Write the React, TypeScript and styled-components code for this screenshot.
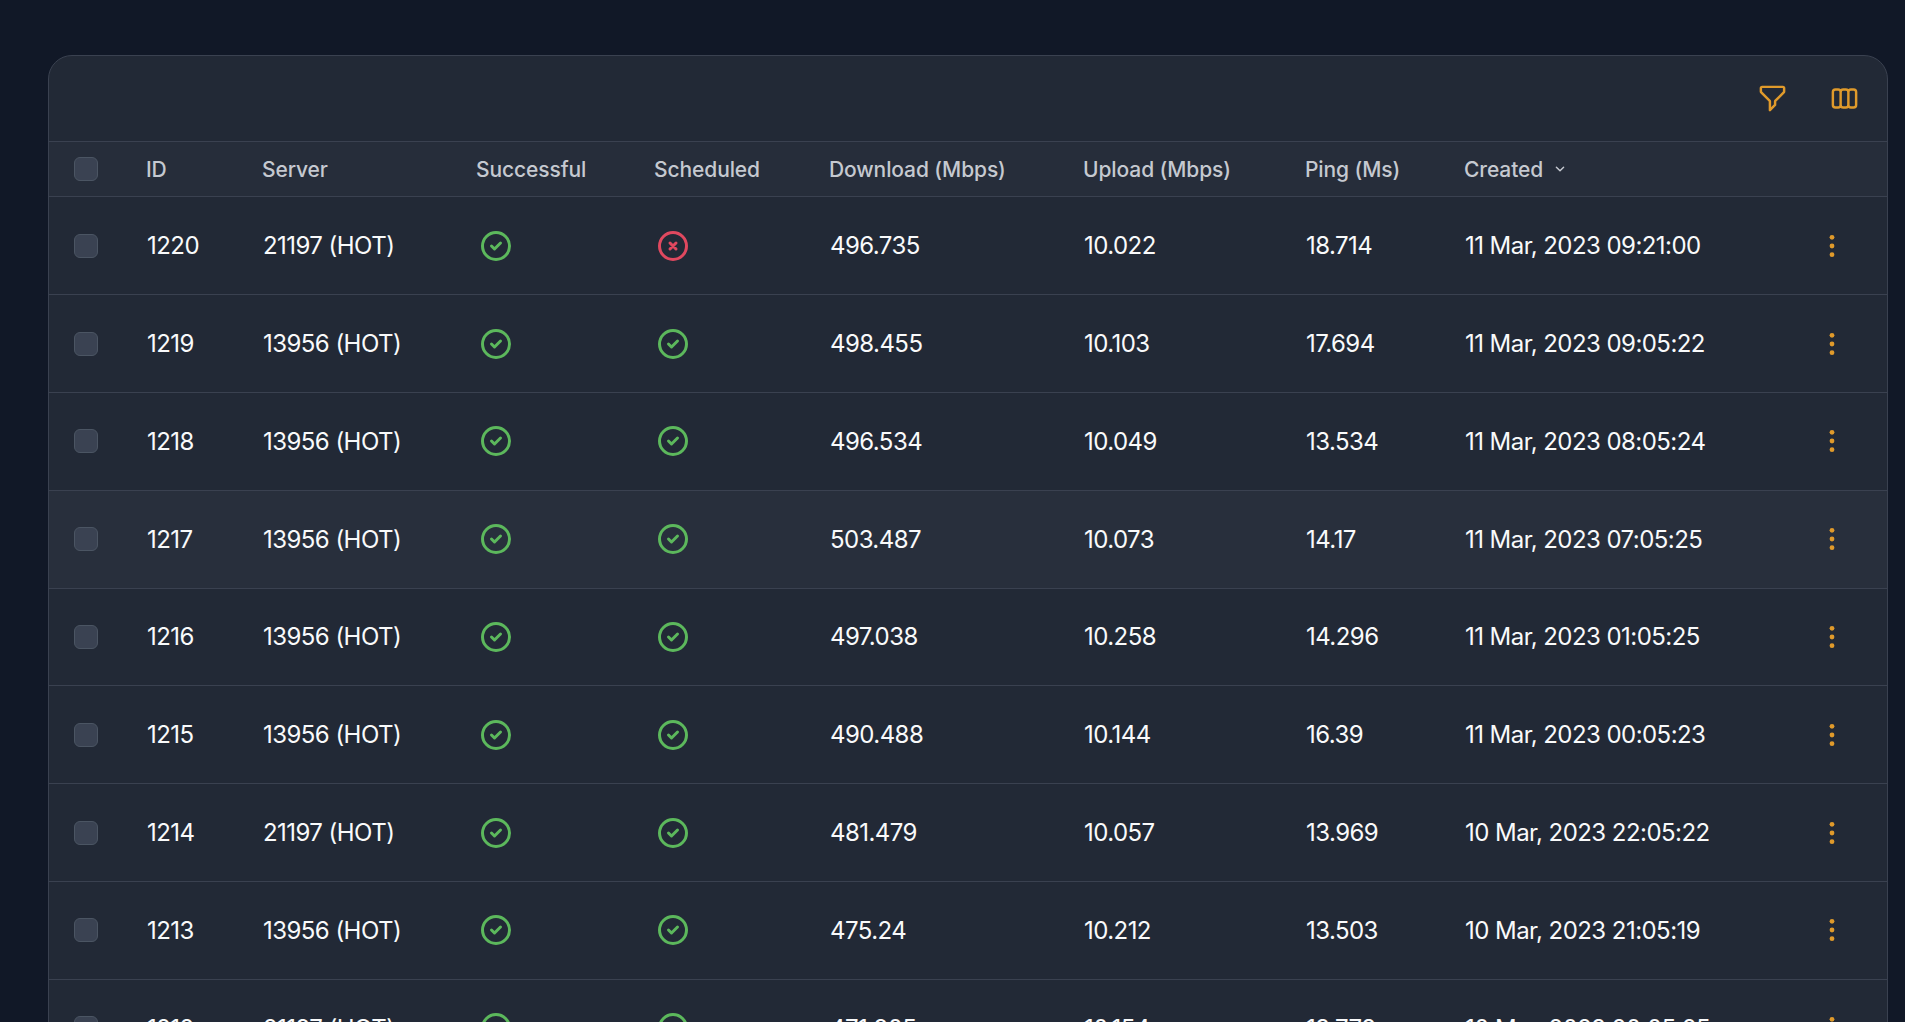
import React from 'react';
import styled, { createGlobalStyle } from 'styled-components';

type Result = {
  id: number;
  server: string;
  scheduled: boolean;
  download: string;
  upload: string;
  ping: string;
  created: string;
};

const results: Result[] = [
  { id: 1220, server: '21197 (HOT)', scheduled: false, download: '496.735', upload: '10.022', ping: '18.714', created: '11 Mar, 2023 09:21:00' },
  { id: 1219, server: '13956 (HOT)', scheduled: true, download: '498.455', upload: '10.103', ping: '17.694', created: '11 Mar, 2023 09:05:22' },
  { id: 1218, server: '13956 (HOT)', scheduled: true, download: '496.534', upload: '10.049', ping: '13.534', created: '11 Mar, 2023 08:05:24' },
  { id: 1217, server: '13956 (HOT)', scheduled: true, download: '503.487', upload: '10.073', ping: '14.17', created: '11 Mar, 2023 07:05:25' },
  { id: 1216, server: '13956 (HOT)', scheduled: true, download: '497.038', upload: '10.258', ping: '14.296', created: '11 Mar, 2023 01:05:25' },
  { id: 1215, server: '13956 (HOT)', scheduled: true, download: '490.488', upload: '10.144', ping: '16.39', created: '11 Mar, 2023 00:05:23' },
  { id: 1214, server: '21197 (HOT)', scheduled: true, download: '481.479', upload: '10.057', ping: '13.969', created: '10 Mar, 2023 22:05:22' },
  { id: 1213, server: '13956 (HOT)', scheduled: true, download: '475.24', upload: '10.212', ping: '13.503', created: '10 Mar, 2023 21:05:19' },
  { id: 1212, server: '21197 (HOT)', scheduled: true, download: '471.905', upload: '10.154', ping: '13.778', created: '10 Mar, 2023 20:05:25' },
];

const App: React.FC = () => {
  return (
    <>
      <GlobalStyle />
      <Page>
        <Card>
          <Toolbar>
            <ToolButton aria-label="Filter">
              <FilterIcon />
            </ToolButton>
            <ToolButton aria-label="Columns">
              <ColumnsIcon />
            </ToolButton>
          </Toolbar>
          <Table>
            <colgroup>
              <col style={{ width: 97 }} />
              <col style={{ width: 116 }} />
              <col style={{ width: 214 }} />
              <col style={{ width: 178 }} />
              <col style={{ width: 175 }} />
              <col style={{ width: 254 }} />
              <col style={{ width: 222 }} />
              <col style={{ width: 159 }} />
              <col />
              <col style={{ width: 110 }} />
            </colgroup>
            <thead>
              <HeadRow>
                <BoxCell>
                  <Check />
                </BoxCell>
                <HeadCell>ID</HeadCell>
                <HeadCell>Server</HeadCell>
                <HeadCell>Successful</HeadCell>
                <HeadCell>Scheduled</HeadCell>
                <HeadCell>Download (Mbps)</HeadCell>
                <HeadCell>Upload (Mbps)</HeadCell>
                <HeadCell>Ping (Ms)</HeadCell>
                <HeadCell>
                  <SortLabel>
                    Created
                    <Chevron />
                  </SortLabel>
                </HeadCell>
                <HeadCell />
              </HeadRow>
            </thead>
            <tbody>
              {results.map((r) => (
                <Row key={r.id} $hover={r.id === 1217}>
                  <BoxCell>
                    <Check />
                  </BoxCell>
                  <Cell>{r.id}</Cell>
                  <Cell>{r.server}</Cell>
                  <SuccessCell>
                    <StatusIcon ok />
                  </SuccessCell>
                  <Cell>
                    <StatusIcon ok={r.scheduled} />
                  </Cell>
                  <Cell>{r.download}</Cell>
                  <Cell>{r.upload}</Cell>
                  <Cell>{r.ping}</Cell>
                  <Cell>{r.created}</Cell>
                  <MoreCell>
                    <MoreIcon />
                  </MoreCell>
                </Row>
              ))}
            </tbody>
          </Table>
        </Card>
      </Page>
    </>
  );
};

const FilterIcon = () => (
  <svg width="31" height="31" viewBox="0 0 24 24" fill="none" stroke="#e09a2b" strokeWidth="1.9" strokeLinecap="round" strokeLinejoin="round">
    <path d="M3 4a1 1 0 011-1h16a1 1 0 011 1v2.586a1 1 0 01-.293.707l-6.414 6.414a1 1 0 00-.293.707V17l-4 4v-6.586a1 1 0 00-.293-.707L3.293 7.293A1 1 0 013 6.586V4z" />
  </svg>
);

const ColumnsIcon = () => (
  <svg width="31" height="31" viewBox="0 0 24 24" fill="none" stroke="#e09a2b" strokeWidth="1.9" strokeLinecap="round" strokeLinejoin="round">
    <path d="M9 17V7m0 10a2 2 0 01-2 2H5a2 2 0 01-2-2V7a2 2 0 012-2h2a2 2 0 012 2m0 10a2 2 0 002 2h2a2 2 0 002-2M9 7a2 2 0 012-2h2a2 2 0 012 2m0 10V7m0 10a2 2 0 002 2h2a2 2 0 002-2V7a2 2 0 00-2-2h-2a2 2 0 00-2 2" />
  </svg>
);

const Chevron = () => (
  <svg width="18" height="18" viewBox="0 0 20 20" fill="none" stroke="#c5c9d0" strokeWidth="1.6" strokeLinecap="round" strokeLinejoin="round">
    <path d="M6 8l4 4 4-4" />
  </svg>
);

const StatusIcon: React.FC<{ ok?: boolean }> = ({ ok }) => (
  <StatusSvg viewBox="0 0 24 24" fill="none" strokeWidth="2" strokeLinecap="round" strokeLinejoin="round" $ok={ok}>
    <path d={ok ? 'M9 12l2 2 4-4' : 'M10 14l2-2m0 0l2-2m-2 2l-2-2m2 2l2 2'} />
    <circle cx="12" cy="12" r="9" />
  </StatusSvg>
);

const MoreIcon = () => (
  <MoreSvg viewBox="0 0 24 24" fill="#e09a2b">
    <circle cx="12" cy="6.2" r="1.6" />
    <circle cx="12" cy="12" r="1.6" />
    <circle cx="12" cy="17.8" r="1.6" />
  </MoreSvg>
);

const GlobalStyle = createGlobalStyle`
  html, body {
    margin: 0;
    background: #111827;
    overflow: hidden;
  }
  body {
    font-family: Inter, "Liberation Sans", sans-serif;
  }
`;

const Page = styled.div`
  box-sizing: border-box;
  height: 1022px;
  padding: 55px 17px 0 48px;
  overflow: hidden;
`;

const Card = styled.div`
  background: #222936;
  border: 1px solid #3a4150;
  border-radius: 24px;
  overflow: hidden;
`;

const Toolbar = styled.div`
  display: flex;
  justify-content: flex-end;
  align-items: center;
  gap: 41px;
  height: 85.4px;
  padding-right: 27px;
`;

const ToolButton = styled.button`
  display: block;
  width: 31px;
  height: 31px;
  padding: 0;
  background: none;
  border: 0;
`;

const Table = styled.table`
  width: 100%;
  table-layout: fixed;
  border-collapse: collapse;
`;

const HeadRow = styled.tr`
  height: 55px;
  background: #262d3a;
  border-top: 1px solid #3a4150;
`;

const Row = styled.tr<{ $hover?: boolean }>`
  height: 97.8px;
  border-top: 1px solid #3a4150;
  background: ${(p) => (p.$hover ? '#282f3c' : 'transparent')};
`;

const HeadCell = styled.th`
  padding: 0;
  text-align: left;
  font-size: 21px;
  font-weight: 500;
  letter-spacing: -0.1px;
  color: #c5c9d0;
  white-space: nowrap;
`;

const Cell = styled.td`
  padding: 0 0 0 1px;
  font-size: 24px;
  font-weight: 400;
  letter-spacing: -0.55px;
  color: #f9fafb;
  white-space: nowrap;
`;

const SuccessCell = styled(Cell)`
  padding-left: 2px;
`;

const MoreCell = styled.td`
  padding: 0 37px 0 0;
`;

const BoxCell = styled.td`
  padding: 0 0 0 25px;
`;

const Check = styled.div`
  box-sizing: border-box;
  width: 24px;
  height: 24px;
  background: #3a4252;
  border: 1px solid #4b5563;
  border-radius: 6px;
`;

const SortLabel = styled.span`
  display: inline-flex;
  align-items: center;
  gap: 8px;
`;

const StatusSvg = styled.svg<{ $ok?: boolean }>`
  display: block;
  width: 36px;
  height: 36px;
  stroke: ${(p) => (p.$ok ? '#5cb85c' : '#e0485f')};
`;

const MoreSvg = styled.svg`
  display: block;
  width: 36px;
  height: 36px;
  margin-left: auto;
`;

export default App;
